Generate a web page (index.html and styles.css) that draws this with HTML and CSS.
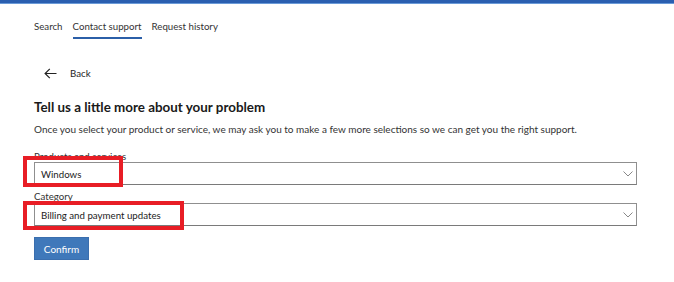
FILE: index.html
```html
<!DOCTYPE html>
<html lang="en">
<head>
<meta charset="utf-8">
<link rel="stylesheet" href="styles.css">
</head>
<body>
<div class="topbar"></div>
<main class="page">
  <nav class="tabs">
    <span class="tab">Search</span>
    <span class="tab active">Contact support</span>
    <span class="tab">Request history</span>
  </nav>
  <div class="back">
    <svg class="back-icon" width="13" height="11" viewBox="0 0 13 11" aria-hidden="true">
      <path d="M12.5 5.5H1.2M5.8 0.8L1.1 5.5L5.8 10.2" fill="none" stroke="#222" stroke-width="1.2"/>
    </svg>
    <span>Back</span>
  </div>
  <h1 class="title">Tell us a little more about your problem</h1>
  <p class="desc">Once you select your product or service, we may ask you to make a few more selections so we can get you the right support.</p>
  <div class="field">
    <label class="label">Products and services</label>
    <div class="select">
      <span>Windows</span>
      <svg class="chev" width="10" height="6" viewBox="0 0 10 6"><path d="M0.5 0.5L5 5L9.5 0.5" fill="none" stroke="#888" stroke-width="1"/></svg>
      <div class="highlight hl1"></div>
    </div>
  </div>
  <div class="field">
    <label class="label">Category</label>
    <div class="select">
      <span>Billing and payment updates</span>
      <svg class="chev" width="10" height="6" viewBox="0 0 10 6"><path d="M0.5 0.5L5 5L9.5 0.5" fill="none" stroke="#888" stroke-width="1"/></svg>
      <div class="highlight hl2"></div>
    </div>
  </div>
  <button class="confirm">Confirm</button>
</main>
</body>
</html>
```
FILE: styles.css
```css
html, body {
  margin: 0;
  padding: 0;
  background: #fff;
}
body {
  font-family: Lato, "Open Sans", sans-serif;
  color: #262626;
  font-size: 9.7px;
}
.topbar {
  height: 3px;
  background: #2a5fb0;
  border-bottom: 1px solid #6a9ad8;
}
.page {
  padding: 0 37px 0 34px;
  display: flex;
  flex-direction: column;
}
.tabs {
  display: flex;
  gap: 10px;
  margin-top: 14px;
  height: 24px;
}
.tab {
  line-height: 16px;
  color: #333;
  height: 19px;
}
.tab.active {
  border-bottom: 2px solid #2b5fa8;
}
.back {
  display: flex;
  align-items: center;
  gap: 13px;
  margin: 23px 0 0 10px;
  height: 16px;
}
.title {
  margin: 17px 0 0;
  font-size: 13.4px;
  font-weight: 700;
  line-height: 18px;
  color: #1a1a1a;
}
.desc {
  margin: 5px 0 0;
  font-size: 10px;
  line-height: 16px;
  color: #333;
}
.field {
  margin-top: 12px;
  display: flex;
  flex-direction: column;
}
.field + .field {
  margin-top: 4px;
}
.label {
  line-height: 14px;
  height: 14px;
  color: #333;
  margin-bottom: -5px;
}
.field + .field .label {
  margin-bottom: -4px;
}
.select {
  position: relative;
  height: 21px;
  border: 1px solid #8f8f8f;
  border-bottom-color: #7a7a7a;
  display: flex;
  align-items: center;
  justify-content: space-between;
  padding: 0 3px 0 6px;
  margin-top: 4px;
  color: #222;
}
.highlight {
  position: absolute;
  border: 4px solid #e81d25;
  left: -12px;
  top: -7px;
  bottom: -3px;
}
.hl1 {
  width: 92px;
}
.hl2 {
  top: -3px;
  bottom: -5px;
  width: 153px;
}
.confirm {
  align-self: flex-start;
  margin-top: 11px;
  width: 55px;
  height: 23px;
  background: #3f78ba;
  border: 1px solid #3a6eae;
  color: #fff;
  font-family: inherit;
  font-size: 10px;
  padding: 0;
}
```
